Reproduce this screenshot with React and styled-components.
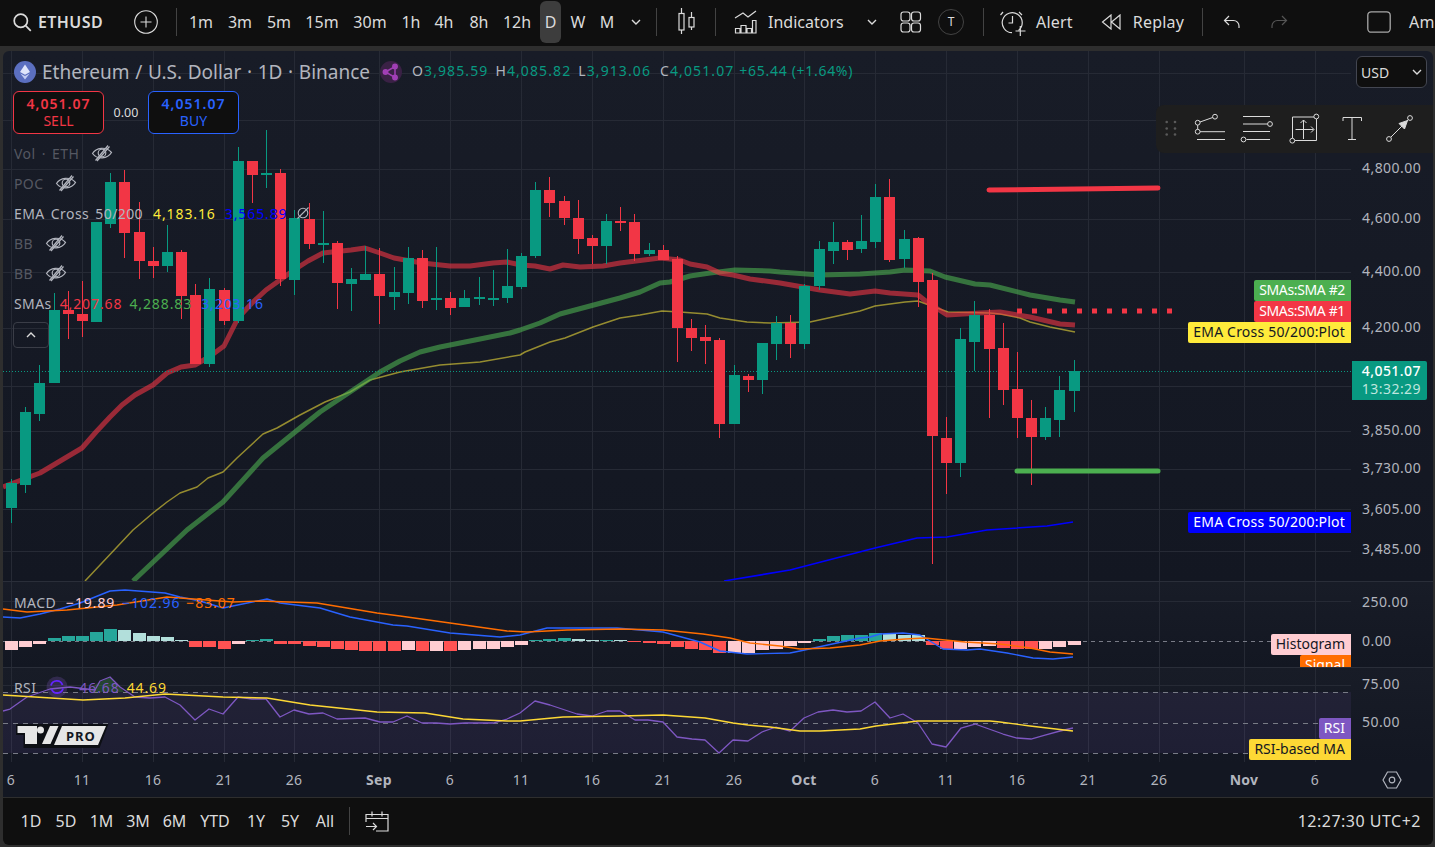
import React from "react";
import styled, { createGlobalStyle } from "styled-components";

const UI = `"Noto Sans", "Open Sans", sans-serif`;
const XS = (i) => 11.5 + 14.167 * i;

const CANDLES = [
[1,483,508,479,523],[1,412,485,407,493],[1,383,414,365,421],[1,310,383,293,383],[0,310,314,291,339],[0,314,321,281,337],[1,222,322,222,322],[1,182,224,173,228],[0,182,233,170,258],[0,232,261,202,279],
[0,261,266,247,278],[1,252,266,225,272],[0,252,296,250,319],[0,295,364,284,364],[1,289,364,278,367],[0,290,321,288,325],[1,161,321,147,323],[0,161,175,161,203],[1,173,174,130,188],[0,173,279,169,286],
[1,218,280,210,295],[0,219,244,203,249],[1,243,245,211,263],[0,243,283,241,309],[1,279,284,268,311],[1,274,280,246,280],[0,274,296,248,324],[1,292,297,267,310],[1,258,293,247,304],[0,258,301,250,308],
[1,298,300,247,310],[0,298,308,292,315],[1,298,307,290,307],[1,297,298,277,305],[1,298,300,270,306],[1,286,298,249,303],[1,256,287,253,289],[1,190,256,182,258],[0,190,203,177,217],[0,201,218,196,225],
[0,218,239,200,254],[0,238,246,235,264],[1,221,246,214,264],[0,221,222,207,231],[0,222,254,214,261],[1,250,254,243,256],[0,250,260,245,260],[0,259,328,256,362],[0,328,338,319,351],[0,337,341,325,364],
[0,340,424,338,438],[1,375,424,365,424],[0,376,380,374,392],[1,343,380,343,394],[1,323,344,316,360],[0,323,344,315,358],[1,286,344,284,349],[1,249,286,241,290],[1,242,251,222,264],[0,242,250,240,260],
[1,241,249,215,253],[1,197,242,184,248],[0,197,260,179,262],[1,239,259,230,268],[0,238,282,237,307],[0,280,436,273,564],[0,438,463,417,494],[1,339,463,328,477],[1,315,342,301,371],[0,315,349,309,418],
[0,348,390,323,405],[0,389,418,352,438],[0,418,437,400,485],[1,418,437,407,440],[1,390,420,376,437],[1,371,391,360,412],
];

const SMA1 = "3,487 40,473 82,448 96,432 110,417 122,405 135,395 153,385 167,373 181,367 195,365 209,357 224,346 238,318 252,303 266,290 280,280 294,270 308,261 323,253 351,250 365,248 380,253 394,258 422,263 450,266 470,266 493,263 507,262 521,265 535,266 550,269 563,265 580,267 603,266 620,263 660,258 680,260 690,264 707,267 720,273 733,275 750,279 780,283 820,290 850,294 875,291 890,293 918,295 927,302 947,315 980,313 1000,312 1030,317 1060,324 1075,325";
const SMA2 = "133,581 187,530 223,502 263,458 300,428 320,412 350,392 380,372 400,361 420,352 440,347 460,343 480,339 510,333 520,330 540,323 560,314 590,306 620,298 640,292 660,283 670,282 690,276 710,273 735,270 770,271 780,272 820,275 860,274 890,272 905,270 930,271 945,277 975,284 990,285 1030,295 1060,300 1075,302";
const EMA50 = "85,581 133,530 153,513 167,502 180,493 197,487 208,478 223,472 237,458 263,434 277,428 300,415 325,402 350,392 370,380 400,372 440,365 480,362 520,355 525,352 550,342 565,338 593,327 620,318 640,315 662,311 680,312 707,314 720,318 747,322 770,323 810,322 860,311 875,306 890,304 905,302 918,301 948,312 990,313 1000,314 1020,318 1030,322 1050,327 1075,332";
const EMA200 = "724,581 790,570 875,548 917,538 947,537 987,530 1047,526 1073,522";
const MACD = "3,617 20,618 40,614 60,609 80,603 110,591 125,590 165,593 180,597 200,601 223,608 267,599 280,603 320,608 350,617 393,625 407,626 450,633 500,637 520,635 547,628 577,628 617,628 663,632 700,642 720,651 747,654 790,653 800,651 860,638 870,637 880,634 903,633 920,635 943,649 967,650 980,649 1007,653 1033,658 1053,659 1073,657";
const SIGNAL = "3,609 27,612 67,610 117,605 167,597 233,602 260,601 317,603 377,613 400,616 450,623 507,631 527,632 567,630 620,629 663,630 703,634 730,638 750,643 780,646 800,649 830,648 860,645 880,641 905,639 925,638 945,640 965,642 1000,644 1030,648 1050,652 1073,654";
const RSI = "3,711 10,709 27,697 50,689 70,687 95,690 100,681 110,677 120,687 135,697 150,698 165,697 180,705 195,720 209,709 223,714 238,697 252,699 266,699 280,717 294,710 309,714 323,713 337,719 365,718 380,722 393,722 407,716 422,723 436,723 450,724 465,723 493,723 507,719 520,713 535,701 550,705 577,714 592,716 607,711 620,711 635,720 648,720 663,722 677,737 692,739 705,740 719,753 733,740 748,741 762,732 776,727 790,731 804,718 818,712 833,710 847,712 861,711 875,702 890,718 903,714 918,723 932,744 946,747 961,728 975,724 1003,734 1017,738 1031,739 1045,735 1060,731 1073,728";
const RSIMA = "3,695 83,700 125,698 165,694 223,697 267,698 310,705 377,712 425,713 463,719 507,721 520,721 563,717 620,716 663,715 705,718 733,723 748,725 770,727 800,731 820,731 860,729 876,726 918,721 990,721 1000,722 1030,726 1073,731";

const T = "#26a69a", L = "#b2dfdb", P = "#ffcdd2", R = "#ff5252";
const HIST = [[-9,P],[-6,P],[-3,P],[3,T],[5,T],[5,T],[9,T],[12,T],[11,L],[8,L],[5,L],[4,L],[.6,L],[-6,R],[-6,R],[-8,R],[-3,P],[1.5,T],[2.5,T],[-3,R],[-3,R],[-5,R],[-6,R],[-8,R],[-9,R],[-10,R],[-10,R],[-10,R],[-9,P],[-10,R],[-10,P],[-10,R],[-9,P],[-8,P],[-8,P],[-6,P],[-4,P],[1,T],[2,T],[3,T],[2,L],[1,L],[1,T],[1,L],[-1,R],[-2,R],[-3,R],[-6,R],[-8,R],[-9,R],[-12,R],[-12,P],[-12,P],[-9,P],[-8,P],[-5,P],[-2,P],[2,T],[5,T],[6,T],[6,T],[8,T],[7,L],[6,L],[6,L],[-4,R],[-8,R],[-8,P],[-6,P],[-5,P],[-7,R],[-8,R],[-8,R],[-8,P],[-6,P],[-4,P]];

const VGRID = [11.5,82,153,224,294.5,379.5,450.5,521,592.5,663,734,804.5,875.5,946.5,1017.5,1088,1159,1244,1315];
const HGRID1 = [73,120,169,219,272,328,386,431,469,509,551];
const PRICES = [[168,"4,800.00"],[218,"4,600.00"],[271,"4,400.00"],[327,"4,200.00"],[430,"3,850.00"],[468,"3,730.00"],[509,"3,605.00"],[549,"3,485.00"]];
const TIMES = [[11,"6"],[82,"11"],[153,"16"],[224,"21"],[294,"26"],[379,"Sep",1],[450,"6"],[521,"11"],[592,"16"],[663,"21"],[734,"26"],[804,"Oct",1],[875,"6"],[946,"11"],[1017,"16"],[1088,"21"],[1159,"26"],[1244,"Nov",1],[1315,"6"]];

const Global = createGlobalStyle`
  html, body { margin: 0; height: 100%; background: #2e2e2e; overflow: hidden; }
  #root { height: 100%; }
`;
const Page = styled.div`
  width: 1435px; height: 847px; display: flex; flex-direction: column;
  font-family: ${UI}; color: #dbdbdb; overflow: hidden;
`;
const TopBar = styled.header`
  box-sizing: border-box; height: 46px; flex: none; display: flex; align-items: center; background: #0f0f0f;
  padding: 0 0 2px 13px; white-space: nowrap; font-size: 16px;
`;
const Symbol = styled.span`
  font-weight: 600; font-size: 16px; margin-left: 6px; width: 96px; letter-spacing: .4px; color: #dbdbdb;
`;
const Sep = styled.i`
  display: block; flex: none; width: 1px; height: 28px; background: #434343;
  margin-left: ${p => p.$l || 0}px; margin-right: ${p => p.$r || 0}px;
`;
const ToolBtn = styled.button`
  all: unset; box-sizing: border-box; flex: none; display: flex; align-items: center; justify-content: center;
  height: 42px; width: ${p => p.$w}px; margin-left: ${p => p.$ml || 0}px; font-size: 16px;
  border-radius: 6px; color: #dbdbdb; background: ${p => (p.$on ? "#3d3d3d" : "none")};
  font-family: ${UI};
`;
const LabelBtn = styled(ToolBtn)`
  justify-content: flex-start; gap: ${p => p.$gap || 10}px; padding-left: 18px;
`;
const TitleWord = styled.span`margin-left: ${p => p.$l}px; font-size: 16px; color: #dbdbdb; letter-spacing: .2px;`;
const Icon = styled.svg`
  display: block; flex: none; fill: none; stroke: ${p => p.$c || "#dbdbdb"}; stroke-width: ${p => p.$sw || 1.2};
  margin-left: ${p => p.$ml || 0}px;
`;
const Strip = styled.div`height: 5px; flex: none;`;
const Panel = styled.main`
  position: relative; margin: 0 2px 0 3px; flex: none; display: flex; flex-direction: column;
  border-radius: 6px 6px 0 0; overflow: hidden;
`;
const Pane = styled.section`
  box-sizing: border-box; position: relative; display: flex; height: ${p => p.$h}px; overflow: hidden;
  background: linear-gradient(#181c27, #131722);
  border-bottom: ${p => (p.$line ? "1px solid #2a2e39" : "0")};
`;
const Plot = styled.div`position: relative; width: 1348px; flex: none;`;
const Chart = styled.svg`display: block; width: 1348px; height: 100%;`;
const PriceAxis = styled.div`position: relative; flex: 1;`;
const Tick = styled.span`
  position: absolute; left: 11px; transform: translateY(-50%);
  font-size: 14px; color: #b2b5be; letter-spacing: .45px; line-height: 18px;
`;
const PriceNow = styled.div`
  position: absolute; left: 1px; top: 310px; width: 75px; height: 39px; background: #089981; border-radius: 0 2px 2px 0;
  display: flex; flex-direction: column; align-items: flex-end; padding: 0 6px 2px 0; box-sizing: border-box;
  font-size: 14px; line-height: 18px; letter-spacing: .45px; color: #fff; justify-content: center; font-weight: 500;
  span { font-weight: 400; color: #bfe6df; }
`;
const Tag = styled.span`
  position: absolute; right: 0; top: ${p => p.$top}px; height: 21px; line-height: 20px; padding: 0 6px 0 5px;
  font-size: 14px; white-space: nowrap; background: ${p => p.$bg}; color: ${p => p.$c || "#fff"}; border-radius: 2px 0 0 2px;
  letter-spacing: ${p => p.$ls || 0}px;
`;
const TimeAxis = styled.div`
  box-sizing: border-box; position: relative; height: 36px; background: #131722; border-bottom: 1px solid #2e2e2e; flex: none;
`;
const TimeLabel = styled.span`
  position: absolute; top: 8px; transform: translateX(-50%); font-size: 14px; line-height: 20px; letter-spacing: .3px;
  color: #b2b5be; font-weight: ${p => (p.$b ? 700 : 400)};
`;
const SettingsSpot = styled.span`position: absolute; left: 1378px; top: 7px;`;
const BottomBar = styled.footer`
  box-sizing: border-box; flex: none; height: 47px; margin: 0 2px 0 3px; background: #0f0f0f; border-radius: 0 0 6px 6px; display: flex; align-items: center;
  padding: 0 0 1px 10px; font-size: 16px; color: #dbdbdb;
`;
const Range = styled.span`
  width: ${p => p.$w}px; text-align: center; flex: none;
`;
const Clock = styled.span`margin-left: auto; margin-right: 12px; letter-spacing: .5px;`;

const Legend = styled.div`
  position: absolute; left: 11px; top: 7px; display: flex; flex-direction: column; align-items: flex-start;
  font-size: 14px; letter-spacing: .4px; color: #b2b5be; pointer-events: none;
`;
const TitleRow = styled.div`display: flex; align-items: center; height: 28px;`;
const Title = styled.span`font-size: 19px; letter-spacing: 0; word-spacing: .7px; margin-left: 6px; color: #b2b5be; width: 328px; white-space: nowrap;`;
const Ohlc = styled.span`
  margin: 0 0 3px ${p => p.$l || 0}px; color: ${p => p.$c || "#b2b5be"}; white-space: nowrap; letter-spacing: ${p => p.$ls || 1.1}px;
`;
const TradeRow = styled.div`display: flex; align-items: center; margin: 5px 0 4px -1px;`;
const TradeBox = styled.div`
  box-sizing: border-box; width: 91px; height: 43px; border: 1px solid ${p => p.$c}; border-radius: 6px; background: #0f0f0f;
  color: ${p => p.$c}; display: flex; flex-direction: column; align-items: center; justify-content: center; line-height: 17px;
  padding-bottom: 2px; letter-spacing: .3px; b { font-weight: 600; font-size: 14px; letter-spacing: 1px; } span { font-size: 14px; letter-spacing: 0; }
`;
const Spread = styled.span`width: 44px; text-align: center; font-size: 12.5px; color: #dbdbdb; letter-spacing: 0;`;
const LegendRow = styled.div`
  display: flex; align-items: center; height: 30px; white-space: pre; word-spacing: 2.2px; color: ${p => (p.$dim ? "#555862" : "#b2b5be")};
`;
const Val = styled.span`color: ${p => p.$c}; margin-left: ${p => p.$l}px; letter-spacing: .9px; word-spacing: 0;`;
const SmallLegend = styled(Legend)`top: ${p => p.$top}px;`;
const Collapse = styled.span`
  box-sizing: border-box; width: 36px; height: 26px; border: 1px solid #3a3d47; border-radius: 4px; margin: 4px 0 0 -1px;
  display: flex; align-items: center; justify-content: center;
`;
const Floating = styled.div`
  position: absolute; left: 1153px; top: 54px; width: 290px; height: 48px; background: #1e1e1e; border-radius: 8px 0 0 8px;
`;
const FloatSvg = styled.svg`display: block; fill: none; stroke: #dbdbdb; stroke-width: 1;`;
const Select = styled.div`
  position: absolute; left: 1353px; top: 5px; box-sizing: border-box; width: 71px; height: 32px; background: #0f0f0f;
  border: 1px solid #434651; border-radius: 6px; display: flex; align-items: center; justify-content: space-between;
  padding: 0 3px 0 4px; font-size: 14px; color: #dbdbdb;
`;
const Logo = styled.svg`position: absolute; left: 13px; top: 56px; display: block;`;
const ProText = styled.text`font: 700 13px ${UI}; fill: #131722; letter-spacing: 1px;`;
const TWord = styled.span`font-size: 12px; line-height: 1; color: #dbdbdb;`;
const TCircle = styled.span`
  box-sizing: border-box; width: 26px; height: 26px; margin-left: 11px; border: 1px solid #434343; border-radius: 50%; display: flex; align-items: center; justify-content: center;
`;

const Grid = ({ y0, h, ys }) => (
  <g stroke="#262a35" strokeWidth="1" shapeRendering="crispEdges">
    {VGRID.map((x) => <line key={x} x1={x} x2={x} y1={y0} y2={y0 + h} />)}
    {ys.map((y) => <line key={y} x1="3" x2="1351" y1={y + 0.5} y2={y + 0.5} />)}
  </g>
);

const Poly = ({ pts, c, w, o = 1 }) => (
  <polyline points={pts} fill="none" stroke={c} strokeWidth={w} strokeOpacity={o} strokeLinejoin="round" />
);

const EyeOff = () => (
  <Icon width="22" height="18" viewBox="0 0 22 18" $c="#b2b5be" $sw={1.2} $ml={12}>
    <path d="M1.5 9.5C5 3.5 15 2 20.5 8.5 16.5 15 6.5 16 1.5 9.5Z" />
    <circle cx="11" cy="9" r="3.8" />
    <path d="M4.5 16.5 17 1.5M6 17 18.5 2.5" />
  </Icon>
);
const NoSign = () => (
  <Icon width="14" height="14" viewBox="0 0 14 14" $c="#b2b5be" $sw={1.1} $ml={8}>
    <circle cx="7" cy="7" r="4.8" />
    <path d="M1.500 12.500 12.500 1.500" />
  </Icon>
);
const Chevron = ({ up, c = "#dbdbdb" }) => (
  <Icon width="12" height="8" viewBox="0 0 12 8" $c={c} $sw={1.4}>
    <path d={up ? "M2 6 6 2l4 4" : "M2 2l4 4 4-4"} />
  </Icon>
);

export default function App() {
  return (
    <Page>
      <Global />
      <TopBar>
        <Icon width="19" height="19" viewBox="0 0 19 19" $sw={1.7}><circle cx="7.8" cy="7.8" r="6.6" /><path d="m12.6 12.6 5.2 5.2" /></Icon>
        <Symbol>ETHUSD</Symbol>
        <Icon width="24" height="24" viewBox="0 0 24 24" $sw={1.1}><circle cx="12" cy="12" r="11.3" /><path d="M12 6.5v11M6.5 12h11" /></Icon>
        <Sep $l={18} $r={5} />
        {[["1m",38],["3m",40],["5m",38],["15m",48],["30m",48],["1h",34],["4h",32],["8h",38],["12h",38]].map(([t, w]) => <ToolBtn key={t} $w={w}>{t}</ToolBtn>)}
        <ToolBtn $w={21} $ml={4} $on>D</ToolBtn>
        <ToolBtn $w={34}>W</ToolBtn>
        <ToolBtn $w={24}>M</ToolBtn>
        <ToolBtn $w={34}><Chevron /></ToolBtn>
        <Sep $l={3} />
        <ToolBtn $w={58}>
          <Icon width="20" height="28" viewBox="676 8 20 28" $ml={2}>
            <path d="M680.5 8v5M680.5 30v4M690.5 12v5M690.5 27v3" />
            <rect x="678" y="13.5" width="5" height="16.5" /><rect x="688" y="17.5" width="5" height="9.5" />
          </Icon>
        </ToolBtn>
        <Sep />
        <LabelBtn $w={147} $gap={10}>
          <Icon width="24" height="24" viewBox="734 9 24 24">
            <path d="M735 17l8-5 5 4 8-6" />
            <path d="M735.5 27.5h4.5v4.5h-4.5zM741 24.5h5v7.500h-5zM747 27.500h4.500v4.500h-4.500zM752.500 19.500h3.500v12.500h-3.500z" />
          </Icon>
          <span>Indicators</span>
        </LabelBtn>
        <ToolBtn $w={22} $ml={-2}><Chevron /></ToolBtn>
        <ToolBtn $w={32} $ml={12}>
          <Icon width="22" height="22" viewBox="900 11 22 22">
            <rect x="901" y="12" width="9" height="9" rx="2.500" /><rect x="911.500" y="12" width="9" height="9" rx="2.500" />
            <rect x="901" y="23" width="9" height="9" rx="2.500" /><rect x="911.500" y="23" width="9" height="9" rx="2.500" />
          </Icon>
        </ToolBtn>
        <TCircle><TWord>T</TWord></TCircle>
        <Sep $l={19} $r={16} />
        <Icon width="27" height="28" viewBox="999 7 27 28">
          <path d="M1017.500 29.500A10 10 0 1 0 1011 31.700" />
          <path d="M1011.500 15v7h-4M1002 11l-2.500 3M1018 11l3 3M1019.300 25v10M1014.500 30h10" />
        </Icon>
        <TitleWord $l={9}>Alert</TitleWord>
        <Icon width="20" height="16" viewBox="0 0 20 16" $ml={28}>
          <path d="M10 1v14L1.500 8zM19 1v14L10.500 8z" />
        </Icon>
        <TitleWord $l={12}>Replay</TitleWord>
        <Sep $l={18} />
        <Icon width="18" height="16" viewBox="0 0 18 16" $ml={20} $sw={1.2}>
          <path d="M6 2 1.500 6.500 6 11M1.500 6.500h9a5.500 5.500 0 0 1 5.500 5.500v2" />
        </Icon>
        <Icon width="18" height="16" viewBox="0 0 18 16" $ml={29} $c="#555" $sw={1.2}>
          <path d="M12 2l4.500 4.500L12 11M16.500 6.500h-9A5.500 5.500 0 0 0 2 12v2" />
        </Icon>
        <Icon width="24" height="22" viewBox="0 0 24 22" $ml={79} $c="#a8a8a8" $sw={1.3}>
          <rect x=".8" y=".8" width="22.400" height="20.400" rx="3.500" />
        </Icon>
        <TitleWord $l={18}>Am</TitleWord>
      </TopBar>
      <Strip />
      <Panel>
        <Pane $h={531} $line>
          <Plot>
            <Chart viewBox="3 51 1348 530" preserveAspectRatio="none">
              <Grid y0={51} h={530} ys={HGRID1} />
              <Poly pts={EMA200} c="#0000ff" w={1.6} />
              <Poly pts={EMA50} c="#ffeb3b" w={1.5} o={0.55} />
              <Poly pts={SMA2} c="#4caf50" w={5} o={0.6} />
              <Poly pts={SMA1} c="#f23645" w={5} o={0.6} />
              <line x1="3" x2="1351" y1="371.500" y2="371.500" stroke="#089981" strokeDasharray="1 2" shapeRendering="crispEdges" />
              <g shapeRendering="crispEdges">
                {CANDLES.map(([up, t, b, wt, wb], i) => {
                  const x = Math.floor(XS(i));
                  const c = up ? "#089981" : "#f23645";
                  return (
                    <g key={i} fill={c}>
                      <rect x={x} y={wt} width="1" height={wb - wt} />
                      <rect x={x - 5} y={t} width="11" height={Math.max(b - t, 1.5)} />
                    </g>
                  );
                })}
              </g>
              <line x1="989" y1="190" x2="1158" y2="188" stroke="#f23645" strokeWidth="5" strokeLinecap="round" />
              <line x1="1017" y1="471" x2="1158" y2="471" stroke="#4caf50" strokeWidth="5" strokeLinecap="round" />
              <line x1="1017" y1="311" x2="1172" y2="311" stroke="#f23645" strokeWidth="5" strokeDasharray="5 10" />
            </Chart>
            <Tag $top={229} $bg="#4caf50" $ls={-.36}>SMAs:SMA #2</Tag>
            <Tag $top={250} $bg="#f23645" $ls={-.36}>SMAs:SMA #1</Tag>
            <Tag $top={271} $bg="#ffeb3b" $c="#131722" $ls={.2}>EMA Cross 50/200:Plot</Tag>
            <Tag $top={461} $bg="#0000ff" $ls={.2}>EMA Cross 50/200:Plot</Tag>
          </Plot>
          <PriceAxis>
            {PRICES.map(([y, t]) => <Tick key={t} style={{ top: y - 51 }}>{t}</Tick>)}
            <PriceNow>4,051.07<span>13:32:29</span></PriceNow>
          </PriceAxis>
        </Pane>
        <Pane $h={86} $line>
          <Plot>
            <Chart viewBox="3 582 1348 85" preserveAspectRatio="none">
              <Grid y0={582} h={85} ys={[601]} />
              <line x1="3" x2="1351" y1="641.500" y2="641.500" stroke="#787b86" strokeDasharray="4 4" shapeRendering="crispEdges" />
              <g shapeRendering="crispEdges">
                {HIST.map(([v, c], i) => {
                  const x = Math.floor(XS(i)) - 6;
                  return <rect key={i} x={x} y={v > 0 ? 641 - v : 641} width="13" height={Math.abs(v)} fill={c} />;
                })}
              </g>
              <Poly pts={MACD} c="#2962ff" w={1.4} />
              <Poly pts={SIGNAL} c="#ff6d00" w={1.4} />
            </Chart>
            <Tag $top={52} $bg="#ffcdd2" $c="#131722">Histogram</Tag>
            <Tag $top={73} $bg="#ff6d00">Signal</Tag>
            <SmallLegend $top={5}>
              <LegendRow>MACD<Val $c="#ffcdd2" $l={10}>−19.89</Val><Val $c="#2962ff" $l={7}>−102.96</Val><Val $c="#ff6d00" $l={6}>−83.07</Val></LegendRow>
            </SmallLegend>
          </Plot>
          <PriceAxis>
            <Tick style={{ top: 20 }}>250.00</Tick>
            <Tick style={{ top: 59 }}>0.00</Tick>
          </PriceAxis>
        </Pane>
        <Pane $h={94}>
          <Plot>
            <Chart viewBox="3 668 1348 94" preserveAspectRatio="none">
              <Grid y0={668} h={94} ys={[685]} />
              <rect x="3" y="692" width="1348" height="61" fill="#7e57c2" fillOpacity=".11" />
              <g stroke="#787b86" strokeDasharray="5 5" shapeRendering="crispEdges">
                <line x1="3" x2="1351" y1="692.500" y2="692.500" />
                <line x1="3" x2="1351" y1="723.500" y2="723.500" />
                <line x1="3" x2="1351" y1="753.500" y2="753.500" />
              </g>
              <polygon points="89,692 96,684 110,677 120,687 124,692" fill="#4caf50" fillOpacity=".28" />
              <Poly pts={RSI} c="#7e57c2" w={1.3} />
              <Poly pts={RSIMA} c="#fdd835" w={1.4} />
            </Chart>
            <Logo width="93" height="25" viewBox="0 0 93 25">
              <path d="M0 0H92.500L83.500 24H7.500V11H0Z" fill="#0d0f14" />
              <path d="M1.500 2H21V20H9V9H1.500Z" fill="#e6e6e6" />
              <circle cx="24.500" cy="6" r="3.500" fill="#e6e6e6" />
              <path d="M34 2h8.500l-8 18H26z" fill="#e6e6e6" />
              <path d="M46 2H90L82 21H38Z" fill="#e6e6e6" />
              <ProText x="50" y="16.500">PRO</ProText>
            </Logo>
            <Tag $top={50} $bg="#7e57c2">RSI</Tag>
            <Tag $top={71} $bg="#fdd835" $c="#131722">RSI-based MA</Tag>
            <SmallLegend $top={4}>
              <LegendRow>
                RSI
                <Icon width="22" height="22" viewBox="0 0 22 22" $c="#6324ff" $sw={1.8} $ml={10}>
                  <circle cx="11" cy="11" r="10.500" fill="#7e57c2" fillOpacity=".25" stroke="none" />
                  <path d="M5 9.500a6 6 0 0 1 11.500-.5M17 12.500a6 6 0 0 1-11.500.5" />
                </Icon>
                <Val $c="#7e57c2" $l={11}>46.68</Val><Val $c="#fdd835" $l={7}>44.69</Val>
              </LegendRow>
            </SmallLegend>
          </Plot>
          <PriceAxis>
            <Tick style={{ top: 16 }}>75.00</Tick>
            <Tick style={{ top: 54 }}>50.00</Tick>
          </PriceAxis>
        </Pane>
        <TimeAxis>
          {TIMES.map(([x, t, b], i) => <TimeLabel key={i} $b={b} style={{ left: x - 3 }}>{t}</TimeLabel>)}
          <SettingsSpot>
            <Icon width="22" height="22" viewBox="0 0 22 22" $c="#b2b5be" $sw={1.2}>
              <path d="M2 11 6.500 3h9L20 11l-4.500 8h-9z" /><circle cx="11" cy="11" r="2.800" />
            </Icon>
          </SettingsSpot>
        </TimeAxis>

        <Legend>
          <TitleRow>
            <Icon width="22" height="22" viewBox="0 0 22 22" $c="none">
              <circle cx="11" cy="11" r="11" fill="#5b6fc0" />
              <path d="M11 3.500 16 11l-5 2.800L6 11z" fill="#dfe5fb" /><path d="M6.300 12.400 11 15l4.700-2.600L11 18.500z" fill="#c2ccf2" />
            </Icon>
            <Title>Ethereum / U.S. Dollar · 1D · Binance</Title>
            <Icon width="22" height="22" viewBox="0 0 22 22" $c="#a13fb5" $sw={1.5} $ml={10}>
              <circle cx="11" cy="11" r="11" fill="#3a2145" stroke="none" />
              <path d="M5.500 11 15 5.500v11z" />
              <circle cx="5.500" cy="11" r="2.200" fill="#a13fb5" /><circle cx="15" cy="5.500" r="2.200" fill="#a13fb5" /><circle cx="15" cy="16.500" r="2.200" fill="#a13fb5" />
            </Icon>
            <Ohlc $l={10}>O</Ohlc><Ohlc $c="#089981">3,985.59</Ohlc>
            <Ohlc $l={7}>H</Ohlc><Ohlc $c="#089981">4,085.82</Ohlc>
            <Ohlc $l={7}>L</Ohlc><Ohlc $c="#089981">3,913.06</Ohlc>
            <Ohlc $l={9}>C</Ohlc><Ohlc $c="#089981">4,051.07</Ohlc>
            <Ohlc $l={5} $ls={.7} $c="#089981">+65.44 (+1.64%)</Ohlc>
          </TitleRow>
          <TradeRow>
            <TradeBox $c="#f23645"><b>4,051.07</b><span>SELL</span></TradeBox>
            <Spread>0.00</Spread>
            <TradeBox $c="#2962ff"><b>4,051.07</b><span>BUY</span></TradeBox>
          </TradeRow>
          <LegendRow $dim>Vol · ETH<EyeOff /></LegendRow>
          <LegendRow $dim>POC<EyeOff /></LegendRow>
          <LegendRow>EMA Cross 50/200<Val $c="#ffeb3b" $l={10}>4,183.16</Val><Val $c="#0000ff" $l={9}>3,565.89</Val><NoSign /></LegendRow>
          <LegendRow $dim>BB<EyeOff /></LegendRow>
          <LegendRow $dim>BB<EyeOff /></LegendRow>
          <LegendRow>SMAs<Val $c="#f23645" $l={8}>4,207.68</Val><Val $c="#4caf50" $l={7}>4,288.83</Val><Val $c="#2962ff" $l={9}>3,203.16</Val></LegendRow>
          <Collapse><Chevron up /></Collapse>
        </Legend>

        <Select>USD<Chevron /></Select>

        <Floating>
          <FloatSvg width="290" height="48" viewBox="1156 105 290 48">
            <g fill="#5a5a5a" stroke="none">
              {[122, 128.5, 134.5].map((y) => [1166.7, 1175].map((x) => <circle key={x + "-" + y} cx={x} cy={y} r="1.300" />))}
            </g>
            <circle cx="1197.700" cy="122.700" r="2.400" /><circle cx="1215" cy="116.700" r="2.400" /><circle cx="1197.700" cy="131.700" r="2.400" />
            <path d="M1200 122l12.700-4.500M1197.700 125v4.300M1200 131.700h25M1197 139.500h28" />
            <path d="M1243 116.500h27M1243 124h24.500M1243 131.500h27M1246.500 139.500h23.500" />
            <circle cx="1270" cy="124" r="2.400" /><circle cx="1243.500" cy="139.500" r="2.400" />
            <path d="M1292.500 138V117h21.500M1316.500 119v21.500H1295" />
            <circle cx="1316.300" cy="116.500" r="2.400" /><circle cx="1292.300" cy="140.700" r="2.400" />
            <path d="M1303.500 139V120M1300.500 123l3-3 3 3M1295.500 129.500h18M1311 126.500l3 3-3 3" />
            <path d="M1343 121v-3.500h18.500v3.500M1352 117.500v22M1348 139.500h8" />
            <circle cx="1389" cy="139" r="2.400" /><circle cx="1410" cy="118" r="2.400" />
            <path d="M1391 137l17.500-17.500" />
            <path d="M1407.500 120.500l-8.500 3 5.500 5.500z" fill="#dbdbdb" />
          </FloatSvg>
        </Floating>
      </Panel>
      <BottomBar>
        {[["1D",36],["5D",34],["1M",37],["3M",36],["6M",37],["YTD",44],["1Y",38],["5Y",30],["All",40]].map(([t, w]) => <Range key={t} $w={w}>{t}</Range>)}
        <Sep $l={4} />
        <Icon width="24" height="24" viewBox="0 0 24 24" $ml={15} $sw={1.2}>
          <path d="M1 13V5.500h22V22H11M1 9.500h22M7 2.500v5M17 2.500v5" />
          <path d="M1 17.500h11M8 14l3.500 3.500L8 21" />
        </Icon>
        <Clock>12:27:30 UTC+2</Clock>
      </BottomBar>
    </Page>
  );
}
